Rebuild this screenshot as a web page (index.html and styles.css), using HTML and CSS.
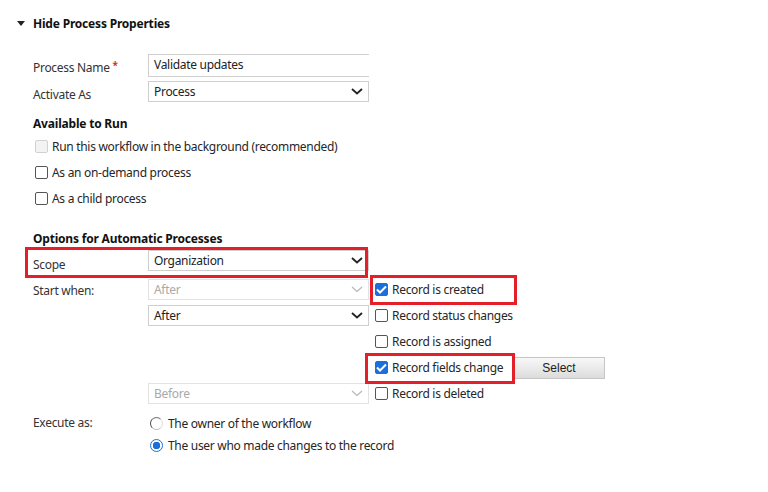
FILE: index.html
```html
<!DOCTYPE html>
<html lang="en">
<head>
    <meta charset="UTF-8">
    <title>Process Properties</title>
    <link rel="stylesheet" href="styles.css">
</head>
<body>

    <div class="panel">
        <div class="toggle"><span class="caret"></span>Hide Process Properties</div>

        <div class="form">
            <div class="row name-row">
                <div class="lbl">Process Name <span class="req">*</span></div>
                <div class="field text-field">Validate updates</div>
            </div>

            <div class="row activate-row">
                <div class="lbl">Activate As</div>
                <div class="field select">
                    <span>Process</span>
                    <svg class="chev" width="12" height="7" viewBox="0 0 12 7"><path d="M1 1l5 4.5L11 1" /></svg>
                </div>
            </div>

            <h3 class="section">Available to Run</h3>
            <div class="check-row"><span class="box disabled"></span>Run this workflow in the background (recommended)</div>
            <div class="check-row"><span class="box"></span>As an on-demand process</div>
            <div class="check-row"><span class="box"></span>As a child process</div>

            <h3 class="section options">Options for Automatic Processes</h3>

            <div class="row scope-row">
                <div class="lbl">Scope</div>
                <div class="field select">
                    <span>Organization</span>
                    <svg class="chev" width="12" height="7" viewBox="0 0 12 7"><path d="M1 1l5 4.5L11 1" /></svg>
                </div>
            </div>

            <div class="start-grid">
                <div class="lbl start-lbl">Start when:</div>
                <div class="field select disabled">
                    <span>After</span>
                    <svg class="chev" width="12" height="7" viewBox="0 0 12 7"><path d="M1 1l5 4.5L11 1" /></svg>
                </div>
                <div class="opt marked created"><span class="box checked"><svg width="11" height="9" viewBox="0 0 11 9"><path d="M1 4.5l3 3L10 1.5" /></svg></span>Record is created</div>

                <div class="field select second">
                    <span>After</span>
                    <svg class="chev" width="12" height="7" viewBox="0 0 12 7"><path d="M1 1l5 4.5L11 1" /></svg>
                </div>
                <div class="opt"><span class="box"></span>Record status changes</div>

                <div class="opt third"><span class="box"></span>Record is assigned</div>

                <div class="opt marked fields fourth"><span class="box checked"><svg width="11" height="9" viewBox="0 0 11 9"><path d="M1 4.5l3 3L10 1.5" /></svg></span>Record fields change<button class="btn">Select</button></div>

                <div class="field select disabled fifth">
                    <span>Before</span>
                    <svg class="chev" width="12" height="7" viewBox="0 0 12 7"><path d="M1 1l5 4.5L11 1" /></svg>
                </div>
                <div class="opt fifth-opt"><span class="box"></span>Record is deleted</div>
            </div>

            <div class="exec">
                <div class="lbl exec-lbl">Execute as:</div>
                <div class="radios">
                    <div class="radio-row"><span class="radio"></span>The owner of the workflow</div>
                    <div class="radio-row"><span class="radio on"></span>The user who made changes to the record</div>
                </div>
            </div>
        </div>
    </div>

</body>
</html>
```

FILE: styles.css
```css
body {
    margin: 0;
    background-color: #fff;
    color: #262626;
    font-family: 'Noto Sans', sans-serif;
    font-size: 12px;
    letter-spacing: -0.3px;
}
.panel {
    padding: 14px 0 0 17px;
}
.toggle {
    display: flex;
    align-items: center;
    height: 18px;
    font-size: 12px;
    font-weight: 700;
    letter-spacing: -0.2px;
    color: #111;
}
.caret {
    width: 0;
    height: 0;
    border-left: 4px solid transparent;
    border-right: 4px solid transparent;
    border-top: 5px solid #222;
    margin-right: 8px;
}
.form {
    padding-left: 16px;
}
.row {
    display: flex;
    align-items: flex-start;
}
.lbl {
    width: 115px;
    flex-shrink: 0;
    line-height: 16px;
    padding-top: 6px;
    color: #333;
}
.req {
    color: #d0312d;
    font-weight: 700;
    font-size: 10px;
    line-height: 0;
    vertical-align: 3px;
}
.field {
    box-sizing: border-box;
    width: 221px;
    height: 21px;
    border: 1px solid #cfcfcf;
    display: flex;
    align-items: center;
    justify-content: space-between;
    padding: 0 5px 0 5px;
    line-height: 16px;
    color: #222;
}
.name-row {
    margin-top: 22px;
}
.text-field {
    height: 23px;
    border-right: none;
    padding-bottom: 2px;
}
.activate-row {
    margin-top: 4px;
}
.chev {
    fill: none;
    stroke: #222;
    stroke-width: 1.8;
}
.select.disabled {
    border-color: #e3e3e3;
    color: #a9a9a9;
}
.select.disabled .chev {
    stroke: #b5b5b5;
    stroke-width: 1.1;
}
.section {
    margin: 12px 0 0 0;
    height: 18px;
    line-height: 18px;
    font-size: 12px;
    font-weight: 700;
    letter-spacing: -0.2px;
    color: #111;
}
.section.options {
    margin-top: 19px;
}
.check-row {
    display: flex;
    align-items: center;
    height: 26px;
    padding-left: 2px;
}
.box {
    box-sizing: border-box;
    width: 13px;
    height: 13px;
    border: 1px solid #555;
    border-radius: 2px;
    margin-right: 4px;
    flex-shrink: 0;
    display: flex;
    align-items: center;
    justify-content: center;
}
.box.disabled {
    border-color: #d2d2d2;
    background-color: #f3f3f3;
}
.box.checked {
    background-color: #1a6fdc;
    border-color: #1a6fdc;
}
.box.checked svg {
    fill: none;
    stroke: #fff;
    stroke-width: 2;
}
.scope-row {
    width: 336px;
    margin-top: 2px;
    position: relative;
}
.scope-row::after {
    content: '';
    position: absolute;
    left: -8px;
    top: -3px;
    right: 1px;
    bottom: -5px;
    border: 3px solid #e3202a;
}
.scope-row .lbl {
    padding-top: 7px;
}
.start-grid {
    display: grid;
    grid-template-columns: 115px 221px 1fr;
    grid-template-rows: repeat(5, 21px);
    row-gap: 5px;
    margin-top: 6px;
}
.start-lbl {
    grid-row: 1;
    grid-column: 1;
    padding-top: 4px;
}
.start-grid .select {
    grid-column: 2;
}
.start-grid .second {
    grid-row: 2;
}
.start-grid .fifth {
    grid-row: 5;
}
.opt {
    grid-column: 3;
    display: flex;
    align-items: center;
    padding-left: 6px;
    position: relative;
}
.third {
    grid-row: 3;
}
.fourth {
    grid-row: 4;
}
.fifth-opt {
    grid-row: 5;
}
.opt.marked::after {
    content: '';
    position: absolute;
    border: 3px solid #e3202a;
}
.created::after {
    left: 1px;
    width: 141px;
    top: -4px;
    bottom: -5px;
}
.fields::after {
    left: -4px;
    width: 144px;
    top: -4px;
    bottom: -6px;
}
.btn {
    position: absolute;
    left: 144px;
    top: 0;
    width: 92px;
    height: 22px;
    border: 1px solid #c6c6c6;
    background: linear-gradient(#f8f8f8, #dcdcdc);
    font-family: 'Liberation Sans', Arial, sans-serif;
    font-size: 12px;
    letter-spacing: 0;
    color: #222;
    padding: 0;
}
.exec {
    display: flex;
    margin-top: 8px;
}
.exec-lbl {
    padding-top: 3px;
}
.radio-row {
    display: flex;
    align-items: center;
    height: 22px;
    padding-left: 2px;
}
.radio {
    box-sizing: border-box;
    width: 13px;
    height: 13px;
    border-radius: 50%;
    border: 1.5px solid;
    border-color: #777 #dcdcdc #bbb #444;
    margin-right: 5px;
    flex-shrink: 0;
}
.radio.on {
    border-color: #1a6fdc;
    background: radial-gradient(circle, #1a6fdc 0 3.5px, #fff 4px);
}
```
